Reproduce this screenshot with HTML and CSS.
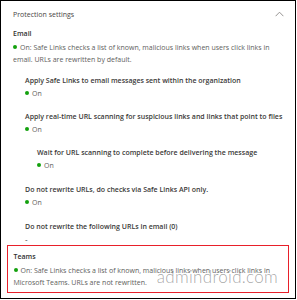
FILE: index.html
```html
<!DOCTYPE html>
<html>
<head>
<meta charset="utf-8">
<link rel="stylesheet" href="styles.css">
</head>
<body>
<div class="panel">
  <div class="header">
    <span class="header-title">Protection settings</span>
    <svg class="chevron" width="9" height="6" viewBox="0 0 9 6"><path d="M0.6 5.2 L4.5 1.2 L8.4 5.2" fill="none" stroke="#8a8886" stroke-width="0.9"/></svg>
  </div>
  <div class="content">
    <div class="section-title">Email</div>
    <div class="desc"><span class="dot"></span>On: Safe Links checks a list of known, malicious links when users click links in email. URLs are rewritten by default.</div>

    <div class="item lvl1 first">
      <div class="item-title">Apply Safe Links to email messages sent within the organization</div>
      <div class="item-value"><span class="dot"></span>On</div>
    </div>
    <div class="item lvl1">
      <div class="item-title">Apply real-time URL scanning for suspicious links and links that point to files</div>
      <div class="item-value"><span class="dot"></span>On</div>
    </div>
    <div class="item lvl2">
      <div class="item-title">Wait for URL scanning to complete before delivering the message</div>
      <div class="item-value"><span class="dot"></span>On</div>
    </div>
    <div class="item lvl1 wide">
      <div class="item-title">Do not rewrite URLs, do checks via Safe Links API only.</div>
      <div class="item-value"><span class="dot"></span>On</div>
    </div>
    <div class="item lvl1 wide">
      <div class="item-title">Do not rewrite the following URLs in email (0)</div>
      <div class="item-value dash">-</div>
    </div>
  </div>
  <div class="highlight">
    <div class="section-title">Teams</div>
    <div class="desc teams-desc"><span class="dot"></span>On: Safe Links checks a list of known, malicious links when users click links in Microsoft Teams. URLs are not rewritten.</div>
    <div class="watermark">admindroid.com</div>
  </div>
</div>
</body>
</html>
```
FILE: styles.css
```css
html, body {
  margin: 0;
  padding: 0;
  background: #ffffff;
}
.panel {
  box-sizing: border-box;
  width: 296px;
  height: 299px;
  border: 1px solid #000000;
  background: #ffffff;
  padding: 8px 6px 0 6px;
  font-family: "Open Sans", "Noto Sans", sans-serif;
  font-size: 7px;
  color: #323130;
}
.header {
  display: flex;
  align-items: center;
  justify-content: space-between;
  height: 12px;
  padding: 0 5px 0 6px;
}
.header-title {
  color: #484644;
  font-weight: 500;
  line-height: 12px;
}
.chevron {
  display: block;
  margin-top: -2px;
}
.content {
  padding: 7px 0 0 6px;
}
.section-title {
  line-height: 12px;
  font-weight: 600;
  color: #323130;
  margin-bottom: 2px;
}
.desc {
  line-height: 12px;
  color: #605e5c;
}
.teams-desc {
  line-height: 11.5px;
}
.dot {
  display: inline-block;
  width: 4px;
  height: 4px;
  border-radius: 50%;
  background: #13a10e;
  margin-right: 3px;
  vertical-align: 1px;
}
.item {
  margin-top: 11px;
}
.item.first {
  margin-top: 9px;
}
.item.wide {
  margin-top: 12px;
}
.lvl1 {
  padding-left: 12px;
}
.lvl2 {
  padding-left: 24px;
}
.item-title {
  line-height: 12px;
  font-weight: 600;
  color: #3b3a39;
  margin-bottom: 1px;
}
.item-value {
  line-height: 12px;
  color: #605e5c;
}
.dash {
  color: #201f1e;
  font-size: 8px;
  line-height: 10px;
}
.highlight {
  position: relative;
  margin-top: 1px;
  border: 1.5px solid #e8202a;
  padding: 5px 5px 4px 5.5px;
}
.watermark {
  position: absolute;
  right: 10px;
  top: 22px;
  font-family: "Lato", "DejaVu Sans", sans-serif;
  font-weight: 300;
  font-size: 17px;
  letter-spacing: 0.3px;
  color: rgba(120, 120, 120, 0.65);
  line-height: 18px;
}
```
